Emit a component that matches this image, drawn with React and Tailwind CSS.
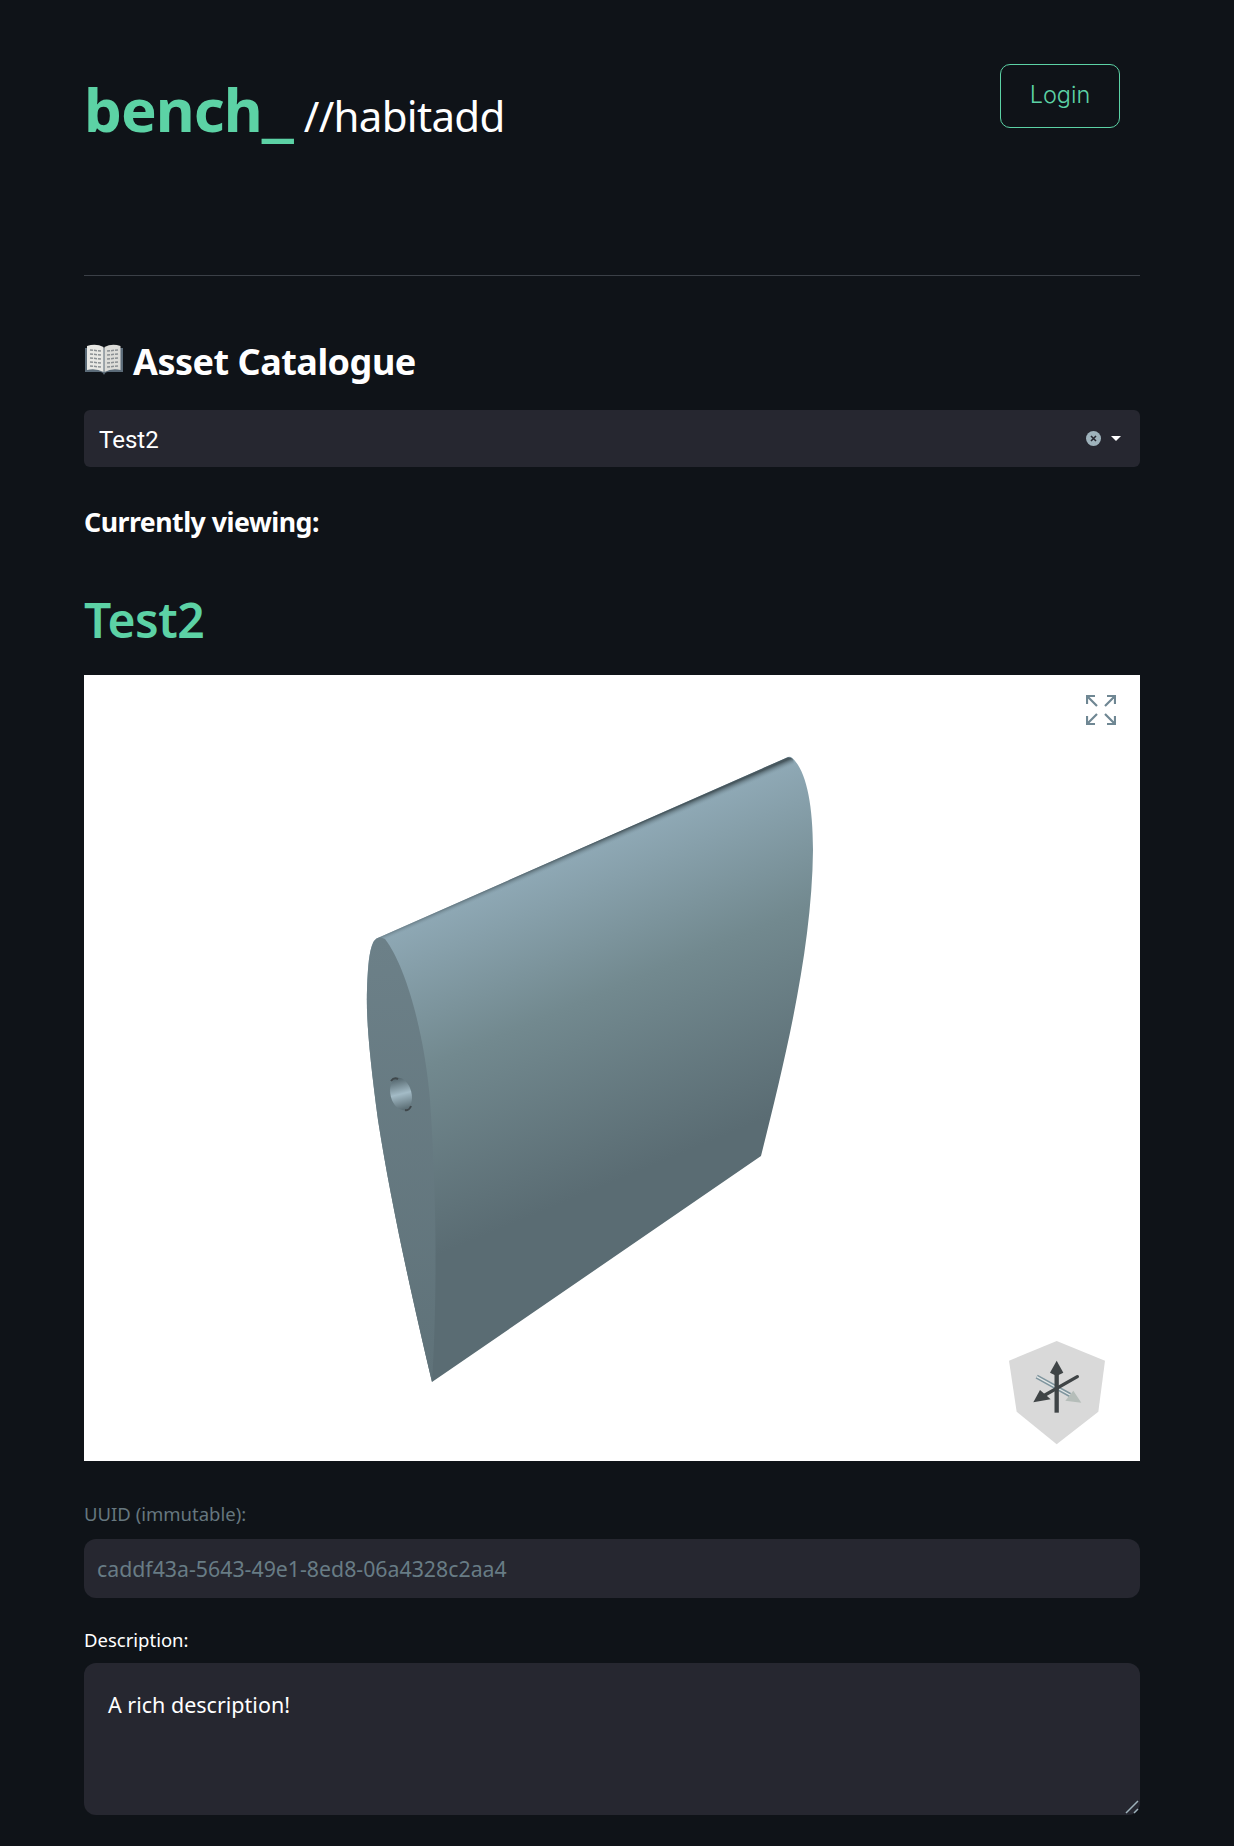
const sans = "font-['Noto_Sans',sans-serif]";

const BookIcon = () => (
  <svg width="40" height="34" viewBox="0 0 40 34" className="mb-[4px] shrink-0">
    <path d="M1 5 L1 29 L16 29 Q19 29 20 32 Q21 29 24 29 L39 29 L39 5 Z" fill="#5b6b78" />
    <path d="M3 3 Q12 0 19.5 4 L19.5 29 Q12 25 3 27 Z" fill="#e8e8e4" />
    <path d="M36.500 3 Q28 0 20.500 4 L20.500 29 Q28 25 36.500 27 Z" fill="#dcdcd8" />
    <g stroke="#8a8f92" strokeWidth="1.500" strokeDasharray="3 1">
      <path d="M6 7 L17 8 M6 11 L17 12 M6 15 L17 16 M6 19 L17 20 M6 23 L17 24" />
      <path d="M34 7 L23 8 M34 11 L23 12 M34 15 L23 16 M34 19 L23 20 M34 23 L23 24" />
    </g>
  </svg>
);

// the 3D part, drawn in page coordinates
const Model = () => (
  <svg viewBox="84 675 1056 786" className="block h-full w-full">
    <defs>
      <linearGradient id="face" gradientUnits="userSpaceOnUse" x1="565" y1="850" x2="690" y2="1150">
        <stop offset="0" stopColor="#90aab7" />
        <stop offset="0.45" stopColor="#72898f" />
        <stop offset="1" stopColor="#5a6c73" />
      </linearGradient>
      <linearGradient id="side" gradientUnits="userSpaceOnUse" x1="390" y1="940" x2="400" y2="1380">
        <stop offset="0" stopColor="#6c8088" />
        <stop offset="1" stopColor="#5f7279" />
      </linearGradient>
      <linearGradient id="hole" gradientUnits="userSpaceOnUse" x1="401" y1="1078" x2="401" y2="1110">
        <stop offset="0" stopColor="#55676e" />
        <stop offset="0.5" stopColor="#a3bbc6" />
        <stop offset="1" stopColor="#5a6c73" />
      </linearGradient>
      <linearGradient id="rim" gradientUnits="userSpaceOnUse" x1="584" y1="847" x2="587" y2="854">
        <stop offset="0" stopColor="#48585f" />
        <stop offset="1" stopColor="#90aab7" stopOpacity="0" />
      </linearGradient>
    </defs>
    <path
      d="M374 941 Q376 938 380 937 L786 758 Q789 756 791 757 C805 768 813 800 813 850 C812 950 785 1060 761 1156 L432 1382 C415 1310 392 1210 378 1120 C370 1060 366 1020 367 990 C368 960 370 948 374 941 Z"
      fill="url(#face)"
    />
    <path d="M380 937 L786 758 Q789 756 793 759 L795 766 L385 947 Z" fill="url(#rim)" />
    <path
      d="M374 941 Q376 938 380 937 L385 939 C405 965 424 1030 430 1100 C437 1200 437 1300 432 1382 C415 1310 392 1210 378 1120 C370 1060 366 1020 367 990 C368 960 370 948 374 941 Z"
      fill="url(#side)"
    />
    <ellipse cx="401" cy="1094" rx="10.500" ry="16.500" transform="rotate(-14 401 1094)" fill="url(#hole)" />
    <path d="M391 1081 Q394 1077 398 1079" stroke="#3f474b" strokeWidth="2" fill="none" />
    <path d="M405 1110 Q409 1111 411 1106" stroke="#3f474b" strokeWidth="2" fill="none" />
  </svg>
);

const ExpandIcon = () => (
  <svg width="30" height="30" viewBox="0 0 30 30" fill="none" stroke="#6f8793" strokeWidth="2.200" className="absolute right-[24px] top-[20px]">
    <path d="M1 9 V1 H9 M1 1 L11 11" />
    <path d="M21 1 H29 V9 M29 1 L19 11" />
    <path d="M1 21 V29 H9 M1 29 L11 19" />
    <path d="M29 21 V29 H21 M29 29 L19 19" />
  </svg>
);

const Gizmo = () => (
  <svg width="140" height="140" viewBox="0 0 420 420" className="absolute left-[906px] top-[645px]">
    <path d="M200 63 L345 122 L325 275 L200 373 L80 275 L57 122 Z" fill="#d9d9d9" />
    <path d="M140 170 L240 225" stroke="#7f959e" strokeWidth="13" />
    <path d="M140 170 L240 225" stroke="#e4e8e8" strokeWidth="4" />
    <path d="M226 242 L250 212 L274 248 Z" fill="#b5bdb9" />
    <path d="M262 170 L165 225" stroke="#3f4446" strokeWidth="10" strokeLinecap="round" />
    <path d="M130 247 L150 210 L182 238 Z" fill="#3f4446" />
    <path d="M200 278 L200 155" stroke="#3f4446" strokeWidth="13" />
    <path d="M200 122 L220 158 L200 168 L180 158 Z" fill="#3f4446" />
  </svg>
);

const App = () => (
  <div className={`min-h-[1846px] overflow-hidden bg-[#0f1318] pl-[84px] pr-[94px] text-white ${sans}`}>
    <header className="flex h-[276px] items-start justify-between border-b border-[#3b4047]">
      <h1 className="mt-[63px] flex h-[88px] items-baseline gap-[10px] leading-[88px]">
        <span className="text-[60px] font-bold tracking-[-1px] text-[#5cd2a5]">
          bench<span className="text-[78px] leading-none tracking-normal">_</span>
        </span>
        <span className="text-[42px] font-normal tracking-[-0.7px]">//habitadd</span>
      </h1>
      <button className="mr-[20px] mt-[64px] h-[64px] w-[120px] rounded-[10px] border border-[#5cd2a5] pb-[3px] font-['Inter',sans-serif] text-[23.5px] font-light text-[#5cd2a5]">
        Login
      </button>
    </header>

    <h2 className="mt-[61px] flex h-[50px] items-center gap-[9px] text-[36px] font-bold leading-[50px] tracking-[-0.5px]">
      <BookIcon />
      Asset Catalogue
    </h2>

    <div className="mt-[23px] flex h-[57px] items-center justify-between rounded-[6px] bg-[#262730] pl-[15px] pr-[19px] font-['Roboto',sans-serif] text-[24px]">
      <span className="pt-[3px]">Test2</span>
      <span className="flex items-center gap-[10px]">
        <span className="flex h-[15px] w-[15px] items-center justify-center rounded-full bg-[#9eb2bb]">
          <svg width="7" height="7" viewBox="0 0 7 7" stroke="#262730" strokeWidth="1.600">
            <path d="M1 1 L6 6 M6 1 L1 6" />
          </svg>
        </span>
        <span className="h-0 w-0 border-x-[5px] border-t-[5px] border-x-transparent border-t-white" />
      </span>
    </div>

    <p className="mt-[35px] text-[26.7px] font-bold leading-[40px] tracking-[-0.5px]">Currently viewing:</p>

    <h3 className="mt-[46px] text-[48px] font-semibold leading-[64px] tracking-[-0.5px] text-[#5cd2a5]">Test2</h3>

    <div className="relative mt-[23px] h-[786px] bg-white">
      <Model />
      <ExpandIcon />
      <Gizmo />
    </div>

    <label className="mt-[39px] block text-[18.5px] leading-[28px] text-[#66777f]">UUID (immutable):</label>
    <div className="mt-[11px] flex h-[59px] items-center rounded-[12px] bg-[#262730] pl-[13px] text-[21.3px] text-[#687c85]">
      caddf43a-5643-49e1-8ed8-06a4328c2aa4
    </div>

    <label className="mt-[28px] block text-[18.5px] leading-[28px]">Description:</label>
    <div className="relative mt-[9px] h-[152px] rounded-[12px] bg-[#262730] pl-[24px] pt-[26px] text-[21.5px] leading-[32px]">
      A rich description!
      <svg width="14" height="14" viewBox="0 0 14 14" stroke="#9eb2bb" strokeWidth="1.500" className="absolute bottom-[1px] right-[1px]">
        <path d="M1 13 L13 1 M9 13 L13 9" />
      </svg>
    </div>
  </div>
);

export default App;
